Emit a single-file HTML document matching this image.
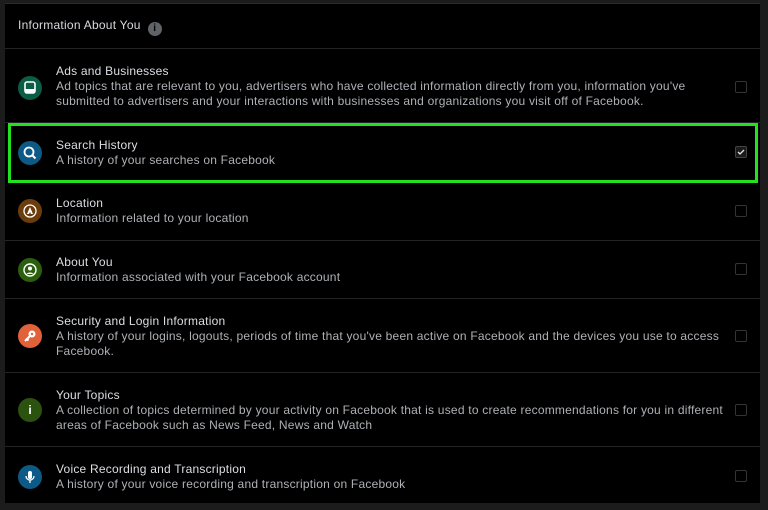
<!DOCTYPE html>
<html><head><style>
*{margin:0;padding:0;box-sizing:border-box}
body{width:768px;height:510px;background:#1c1c1d;font-family:"Liberation Sans",sans-serif;position:relative;overflow:hidden}
.panel{position:absolute;left:5px;top:3px;width:755px;height:500px;background:#000;border-top:1px solid #2a2a2b}
.hdr{position:absolute;left:13px;top:14px;color:#d8dadf;font-size:12px;letter-spacing:0.25px}
.info{display:inline-block;width:14px;height:14px;border-radius:50%;background:#5f6266;color:#000;font-size:10px;font-weight:bold;text-align:center;line-height:14px;margin-left:7px;vertical-align:-2px;letter-spacing:0}
.sep{position:absolute;left:0;width:755px;height:1px;background:#232425}
.ic{position:absolute;left:13px;width:24px;height:24px;border-radius:50%}
.t{position:absolute;left:51px;color:#dcdee3;font-size:12px;line-height:15px;letter-spacing:0.22px}
.t span{display:block;color:#aeb1b6}
.cb{position:absolute;left:730px;width:12px;height:12px;border:1px solid #333435;border-radius:2px}
.hl{position:absolute;left:8px;top:123px;width:750px;height:60px;border:3px solid #22e11d}
</style></head><body>
<div class="panel">
<div class="hdr">Information About You<span class="info">i</span></div>
<div class="sep" style="top:44px"></div>

<div class="ic" style="top:72px;background:#0d5c46"><svg width="24" height="24"><rect x="7" y="6" width="10" height="11" rx="2" fill="none" stroke="#fff" stroke-width="1.6"/><rect x="7" y="13" width="10" height="4" fill="#fff"/></svg></div>
<div class="t" style="top:60px">Ads and Businesses<span>Ad topics that are relevant to you, advertisers who have collected information directly from you, information you've<br>submitted to advertisers and your interactions with businesses and organizations you visit off of Facebook.</span></div>
<div class="cb" style="top:77px"></div>
<div class="sep" style="top:118px"></div>

<div class="ic" style="top:137px;background:#0c5a85"><svg width="24" height="24"><circle cx="11" cy="11" r="4.5" fill="none" stroke="#fff" stroke-width="1.8"/><line x1="14" y1="14" x2="17.5" y2="17.5" stroke="#fff" stroke-width="2"/></svg></div>
<div class="t" style="top:134px">Search History<span>A history of your searches on Facebook</span></div>
<div class="cb" style="top:142px;border-color:#444;background:#1a1a1a"><svg width="10" height="10" style="position:absolute;left:0;top:0"><path d="M2 5l2 2 4-4" fill="none" stroke="#e4e6eb" stroke-width="1.3"/></svg></div>

<div class="ic" style="top:195px;background:#6b3d0d"><svg width="24" height="24"><circle cx="12" cy="12" r="6" fill="none" stroke="#fff" stroke-width="1.3"/><path d="M12 8l-3 7h2l1-2 1 2h2z" fill="#fff"/></svg></div>
<div class="t" style="top:192px">Location<span>Information related to your location</span></div>
<div class="cb" style="top:201px"></div>
<div class="sep" style="top:236px"></div>

<div class="ic" style="top:254px;background:#2c5e10"><svg width="24" height="24"><circle cx="12" cy="12" r="6" fill="none" stroke="#fff" stroke-width="1.4"/><circle cx="12" cy="10.5" r="2" fill="#fff"/><path d="M8.5 16a4 3 0 0 1 7 0z" fill="#fff"/></svg></div>
<div class="t" style="top:251px">About You<span>Information associated with your Facebook account</span></div>
<div class="cb" style="top:259px"></div>
<div class="sep" style="top:294px"></div>

<div class="ic" style="top:320px;background:#e0623a"><svg width="24" height="24"><circle cx="14" cy="10" r="3.5" fill="#fff"/><path d="M12 12l-5 5M9 15l1.5 1.5" stroke="#fff" stroke-width="2"/><circle cx="14" cy="10" r="1.2" fill="#e0623a"/></svg></div>
<div class="t" style="top:310px">Security and Login Information<span>A history of your logins, logouts, periods of time that you've been active on Facebook and the devices you use to access<br>Facebook.</span></div>
<div class="cb" style="top:326px"></div>
<div class="sep" style="top:368px"></div>

<div class="ic" style="top:394px;background:#2c5210"><div style="color:#fff;font-size:12px;font-weight:bold;text-align:center;line-height:24px">i</div></div>
<div class="t" style="top:384px">Your Topics<span>A collection of topics determined by your activity on Facebook that is used to create recommendations for you in different<br>areas of Facebook such as News Feed, News and Watch</span></div>
<div class="cb" style="top:400px"></div>
<div class="sep" style="top:442px"></div>

<div class="ic" style="top:461px;background:#0c5a85"><svg width="24" height="24"><rect x="10" y="6" width="4" height="8" rx="2" fill="#fff"/><path d="M8 11a4 4 0 0 0 8 0M12 15v3" fill="none" stroke="#fff" stroke-width="1.3"/></svg></div>
<div class="t" style="top:458px">Voice Recording and Transcription<span>A history of your voice recording and transcription on Facebook</span></div>
<div class="cb" style="top:466px"></div>
</div>
<div class="hl"></div>
</body></html>
